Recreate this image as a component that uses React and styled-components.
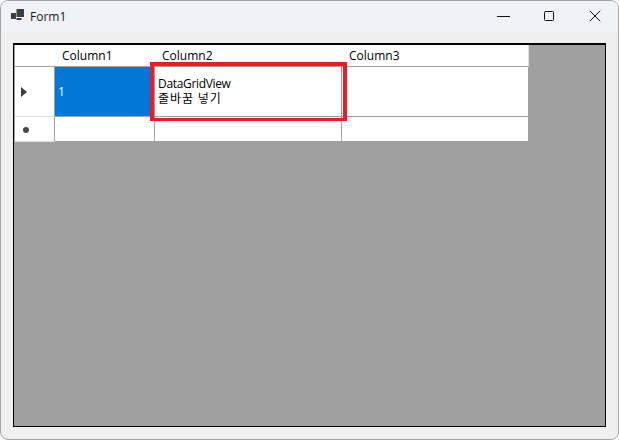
import styled, { createGlobalStyle } from "styled-components";
import { X, Square, Minus } from "lucide-react";

const GlobalStyle = createGlobalStyle`
  html, body {
    margin: 0;
    padding: 0;
    background: #fff;
  }
  body {
    font-family: "Open Sans", "Noto Sans CJK KR", sans-serif;
  }
`;

const rows = [
  { marker: "arrow", height: 50, cells: ["1", "DataGridView\n줄바꿈 넣기", ""] },
  { marker: "star", height: 25, cells: ["", "", ""] },
];

const App = () => {
  return (
    <>
      <GlobalStyle />
      <Screen>
        <Window>
          <TitleBar>
            <AppIcon viewBox="0 0 13 12">
              <rect x="0" y="4" width="5" height="6" fill="#3d3d3d" />
              <rect x="5.5" y="0" width="7.5" height="8" fill="#3d3d3d" />
              <rect x="5.5" y="9" width="5" height="2" fill="#3d3d3d" />
            </AppIcon>
            <Title>Form1</Title>
            <WindowButtons>
              <WindowButton><Minus size={21} strokeWidth={1.15} /></WindowButton>
              <WindowButton><Square size={12} strokeWidth={2} /></WindowButton>
              <WindowButton><X size={20} strokeWidth={1.2} /></WindowButton>
            </WindowButtons>
          </TitleBar>
          <Client>
            <GridView>
              <Table>
                <Corner />
                <HeaderCell>Column1</HeaderCell>
                <HeaderCell>Column2</HeaderCell>
                <HeaderCell>Column3</HeaderCell>
                {rows.map((row, r) => (
                  <Row key={r}>
                    <RowHeader $height={row.height}>
                      {row.marker === "arrow" ? <Arrow /> : <NewRowMark />}
                    </RowHeader>
                    {row.cells.map((value, c) => (
                      <Cell key={c} $selected={r === 0 && c === 0} $height={row.height}>
                        <CellText $multiline={value.includes("\n")}>{value}</CellText>
                      </Cell>
                    ))}
                  </Row>
                ))}
              </Table>
              <Highlight />
            </GridView>
          </Client>
        </Window>
      </Screen>
    </>
  );
};

export default App;

const Screen = styled.div`
  width: 619px;
  height: 440px;
  overflow: hidden;
  background: #fff;
`;

const Window = styled.div`
  box-sizing: border-box;
  width: 619px;
  height: 440px;
  display: flex;
  flex-direction: column;
  border: 1px solid #a3a3a3;
  border-radius: 8px;
  overflow: hidden;
  background: #f0f0f0;
`;

const TitleBar = styled.div`
  height: 30px;
  flex: none;
  display: flex;
  align-items: center;
  padding-left: 10px;
  background: #eff3f8;
`;

const AppIcon = styled.svg`
  width: 13px;
  height: 12px;
  margin-right: 6px;
  margin-top: -2px;
`;

const Title = styled.span`
  font-size: 12px;
  color: #1a1a1a;
`;

const WindowButtons = styled.div`
  margin-left: auto;
  display: flex;
  height: 100%;
`;

const WindowButton = styled.div`
  width: 46px;
  display: flex;
  align-items: center;
  justify-content: center;
  color: #111;
`;

const Client = styled.div`
  flex: 1;
  padding: 12px;
  display: flex;
`;

const GridView = styled.div`
  position: relative;
  flex: 1;
  border: 1px solid #000;
  border-top-width: 2px;
  background: #a0a0a0;
  padding-left: 1px;
`;

const Table = styled.div`
  display: grid;
  grid-template-columns: 40px 100px 187px 187px;
  width: 514px;
  background: #fff;
`;

const Corner = styled.div`
  height: 21px;
  background: #fff;
  border-right: 1px solid #e1e1e1;
  border-bottom: 1px solid #a0a0a0;
`;

const HeaderCell = styled.div`
  height: 21px;
  padding-left: 8px;
  font-size: 12px;
  line-height: 21px;
  color: #000;
  background: #fff;
  border-right: 1px solid #e1e1e1;
  border-bottom: 1px solid #a0a0a0;
  margin-left: -1px;
`;

const Row = styled.div`
  display: contents;
`;

const RowHeader = styled.div`
  box-sizing: border-box;
  height: ${(p) => p.$height}px;
  display: flex;
  align-items: center;
  padding-left: 6px;
  background: #fff;
  border-right: 1px solid #a0a0a0;
  border-bottom: 1px solid #e1e1e1;
`;

const Arrow = styled.div`
  width: 0;
  height: 0;
  margin-top: 1px;
  border-top: 5px solid transparent;
  border-bottom: 5px solid transparent;
  border-left: 6px solid #3f3f3f;
`;

const NewRowMark = styled.div`
  width: 6px;
  height: 6px;
  margin-left: 2px;
  margin-top: 2px;
  border-radius: 50%;
  background: #4a4a4a;
`;

const Cell = styled.div`
  box-sizing: border-box;
  height: ${(p) => p.$height}px;
  display: flex;
  align-items: center;
  padding-left: 3px;
  font-size: 12px;
  line-height: 15px;
  color: ${(p) => (p.$selected ? "#fff" : "#000")};
  background: ${(p) => (p.$selected ? "#0078d7" : "#fff")};
  border-right: 1px solid #a0a0a0;
  border-bottom: 1px solid #a0a0a0;
`;

const CellText = styled.div`
  white-space: pre-line;
  margin-top: ${(p) => (p.$multiline ? "-2px" : "0")};
  letter-spacing: ${(p) => (p.$multiline ? "0.9px" : "0")};

  &::first-line {
    letter-spacing: ${(p) => (p.$multiline ? "-0.33px" : "0")};
  }
`;

const Highlight = styled.div`
  position: absolute;
  left: 136px;
  top: 17px;
  width: 189px;
  height: 52px;
  border: 4px solid #ed1c24;
  border-bottom-width: 3px;
  pointer-events: none;
`;
